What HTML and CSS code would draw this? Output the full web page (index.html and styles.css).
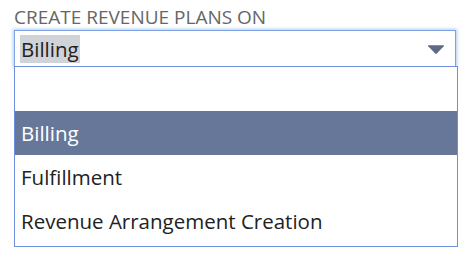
FILE: index.html
```html
<!DOCTYPE html>
<html>
<head>
<meta charset="utf-8">
<link rel="stylesheet" href="styles.css">
</head>
<body>
<div class="field">
  <div class="label">CREATE REVENUE PLANS ON</div>
  <div class="select">
    <span class="value">Billing</span>
    <svg class="arrow" width="18" height="11" viewBox="0 0 18 11"><path d="M1.5 1.2 H16.5 Q17.6 1.2 16.8 2.2 L9.8 9.6 Q9 10.4 8.2 9.6 L1.2 2.2 Q0.4 1.2 1.5 1.2 Z" fill="#5e6b86"/></svg>
  </div>
  <ul class="list">
    <li class="opt"></li>
    <li class="opt selected">Billing</li>
    <li class="opt">Fulfillment</li>
    <li class="opt">Revenue Arrangement Creation</li>
  </ul>
</div>
</body>
</html>
```
FILE: styles.css
```css
html, body {
  margin: 0;
  padding: 0;
  background: #ffffff;
}
.field {
  padding: 4px 0 0 14px;
  width: 444px;
  font-family: "Open Sans", "Noto Sans", sans-serif;
}
.label {
  font-size: 19px;
  line-height: 26px;
  color: #666666;
  letter-spacing: 0;
}
.select {
  box-sizing: border-box;
  width: 442px;
  height: 37px;
  border: 1px solid #7aa3e6;
  box-shadow: 0 0 3px 1px rgba(120, 160, 230, 0.55);
  display: flex;
  align-items: center;
  justify-content: space-between;
  padding: 0 10px 0 5px;
  background: #fff;
}
.value {
  background: #d0d3d8;
  font-size: 20.5px;
  line-height: 28px;
  color: #222222;
  padding: 0 1px 0 1px;
}
.arrow {
  display: block;
  margin-top: 2px;
}
.list {
  box-sizing: border-box;
  list-style: none;
  margin: -1px 0 0 0;
  padding: 0 0 3px 0;
  width: 444px;
  border: 1px solid #6d8fdc;
  background: #fff;
}
.opt {
  height: 44px;
  display: flex;
  align-items: center;
  padding-left: 6px;
  font-size: 20.5px;
  color: #222222;
}
.opt.selected {
  background: #66779a;
  color: #ffffff;
}
```
